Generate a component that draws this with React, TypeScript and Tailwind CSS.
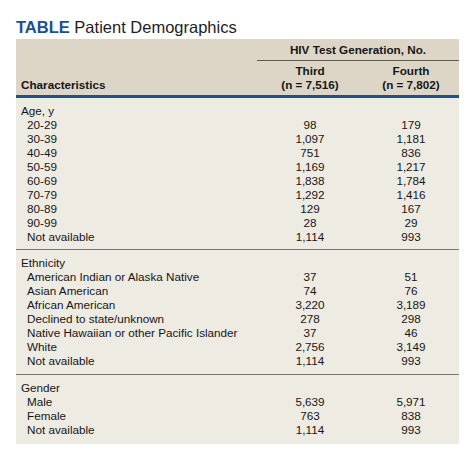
type Section = {
  label: string;
  rows: [string, string, string][];
};

const sections: Section[] = [
  {
    label: "Age, y",
    rows: [
      ["20-29", "98", "179"],
      ["30-39", "1,097", "1,181"],
      ["40-49", "751", "836"],
      ["50-59", "1,169", "1,217"],
      ["60-69", "1,838", "1,784"],
      ["70-79", "1,292", "1,416"],
      ["80-89", "129", "167"],
      ["90-99", "28", "29"],
      ["Not available", "1,114", "993"],
    ],
  },
  {
    label: "Ethnicity",
    rows: [
      ["American Indian or Alaska Native", "37", "51"],
      ["Asian American", "74", "76"],
      ["African American", "3,220", "3,189"],
      ["Declined to state/unknown", "278", "298"],
      ["Native Hawaiian or other Pacific Islander", "37", "46"],
      ["White", "2,756", "3,149"],
      ["Not available", "1,114", "993"],
    ],
  },
  {
    label: "Gender",
    rows: [
      ["Male", "5,639", "5,971"],
      ["Female", "763", "838"],
      ["Not available", "1,114", "993"],
    ],
  },
];

export default function App() {
  return (
    <div className="min-h-[455px] w-[474px] bg-white pt-[17px] font-['Liberation_Sans',Arial,sans-serif] text-[#161616]">
      <div className="ml-[16px] w-[443px]">
        <h1 className="mb-[2px] h-[20px] text-[16.5px] leading-[20px] font-normal text-[#1e1e1e]">
          <span className="font-bold text-[#1d4f8c]">TABLE</span> Patient Demographics
        </h1>

        {/* header */}
        <div className="flex border-b-[3px] border-[#1f4f8f] bg-[#ddd6c7] pt-[4px] pb-[3px] text-[11.7px] leading-[14px] font-bold">
          <div className="flex w-[241px] items-end pl-[5px]">Characteristics</div>
          <div className="flex flex-1 flex-col">
            <div className="border-b border-[#5a5a5a] pb-[3px] text-center">HIV Test Generation, No.</div>
            <div className="flex pt-[3px]">
              <div className="w-[106px] text-center">
                <div>Third</div>
                <div>(n = 7,516)</div>
              </div>
              <div className="flex-1 text-center">
                <div>Fourth</div>
                <div>(n = 7,802)</div>
              </div>
            </div>
          </div>
        </div>

        {/* body */}
        <div className="bg-[#eeebe3] pb-[1px] text-[11.7px] leading-[14px]">
          {sections.map((s, i) => (
            <div
              key={s.label}
              className={
                i === 0
                  ? "pt-[6px] pb-[5px]"
                  : "border-t border-[#777] pt-[6px] pb-[6px]"
              }
            >
              <div className="pl-[5px]">{s.label}</div>
              {s.rows.map((r, j) => (
                <div key={j} className="flex">
                  <div className="w-[241px] pl-[11px]">{r[0]}</div>
                  <div className="w-[106px] text-center">{r[1]}</div>
                  <div className="flex-1 text-center">{r[2]}</div>
                </div>
              ))}
            </div>
          ))}
        </div>
      </div>
    </div>
  );
}
